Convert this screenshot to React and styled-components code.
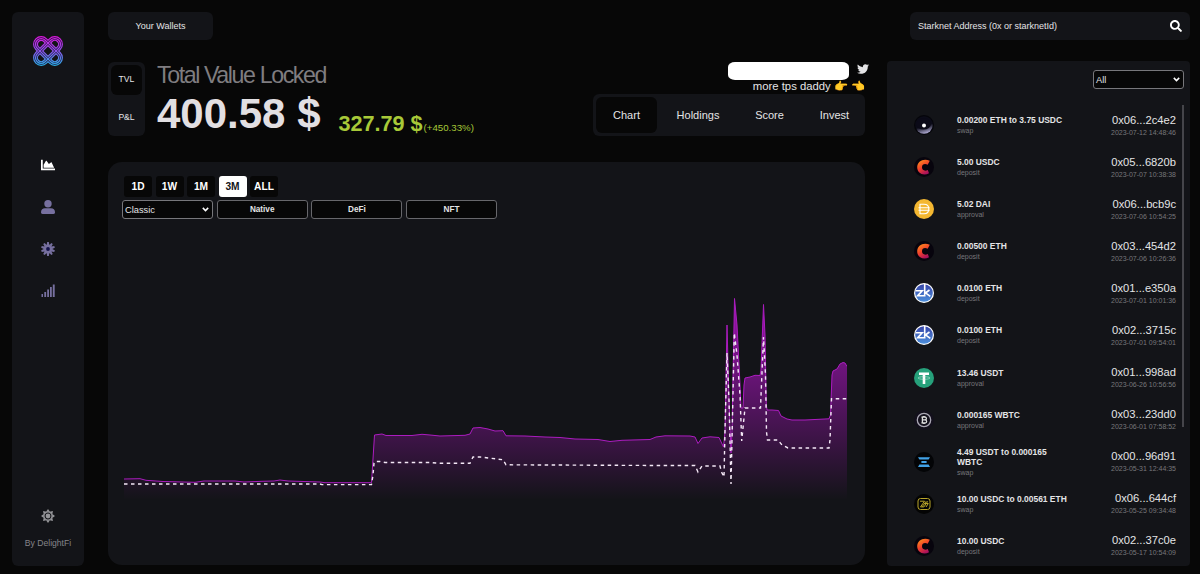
import React from 'react'
import styled, { createGlobalStyle } from 'styled-components'
import { FaChartArea, FaSearch, FaTwitter } from 'react-icons/fa'

const GlobalStyle = createGlobalStyle`
  * {
    box-sizing: border-box;
  }

  body {
    margin: 0;
    background: #070707;
    color: #e4e4e6;
    font-family: 'Liberation Sans', Arial, sans-serif;
    overflow: hidden;
  }

  button {
    font-family: inherit;
    color: inherit;
    border: 0;
    padding: 0;
  }
`

const transactions = [
  { icon: 'orb', name: '0.00200 ETH to 3.75 USDC', type: 'swap', hash: '0x06...2c4e2', date: '2023-07-12 14:48:46' },
  { icon: 'carmine', name: '5.00 USDC', type: 'deposit', hash: '0x05...6820b', date: '2023-07-07 10:38:38' },
  { icon: 'dai', name: '5.02 DAI', type: 'approval', hash: '0x06...bcb9c', date: '2023-07-06 10:54:25' },
  { icon: 'carmine', name: '0.00500 ETH', type: 'deposit', hash: '0x03...454d2', date: '2023-07-06 10:26:36' },
  { icon: 'zk', name: '0.0100 ETH', type: 'deposit', hash: '0x01...e350a', date: '2023-07-01 10:01:36' },
  { icon: 'zk', name: '0.0100 ETH', type: 'deposit', hash: '0x02...3715c', date: '2023-07-01 09:54:01' },
  { icon: 'tether', name: '13.46 USDT', type: 'approval', hash: '0x01...998ad', date: '2023-06-26 10:56:56' },
  { icon: 'wbtc', name: '0.000165 WBTC', type: 'approval', hash: '0x03...23dd0', date: '2023-06-01 07:58:52' },
  { icon: 'sith', name: '4.49 USDT to 0.000165 WBTC', type: 'swap', hash: '0x00...96d91', date: '2023-05-31 12:44:35' },
  { icon: 'tenk', name: '10.00 USDC to 0.00561 ETH', type: 'swap', hash: '0x06...644cf', date: '2023-05-25 09:34:48' },
  { icon: 'carmine', name: '10.00 USDC', type: 'deposit', hash: '0x02...37c0e', date: '2023-05-17 10:54:09' },
]

const totalPoints =
  '124,479 140,478.7 146,480.3 163,481.5 195,482.3 204,481 235,481 244,482 262,481.3 274,481 280,480 288,481 320,482 325,482.7 371.5,482.7 374.5,435 382,434 386,435.5 412,435.5 422,434.3 430,435 440,436 465,435.3 470,434 473,428 480,427.5 488,429 495,431 503,430.7 506,435.8 525,436 545,437 560,437.5 575,439 598,439.5 610,441.5 622,440.3 650,439.5 656,437 665,435.8 690,436 695,437 698,443.5 702,438 710,436.8 719,437.5 723.5,447 725,432 727,325 729,400 731,453 732,430 734.5,298.5 737,325 740,385 741,408 743,408 744,385 745,378 750,377 755,375.3 760,375.5 761,370 763.5,304.5 765,335 766.3,405 767,410 772,410 778.5,410.5 781,416 787,419 792,420 805,420 829,418.8 830.5,415 832,375 833,371 837,369 840,364 843,362.5 845,363 847,366.5'

const nativePoints =
  '124,484 320,484 322,484.6 371.5,484.6 373,475 374,463 375,461.5 380,461.5 385,462.5 430,462.5 440,463.3 470,463.3 473,457 480,457 503,459.7 506,464.8 660,465.5 695,465.5 698,472 702,466 720,466 721.5,472 724,477 725,430 727,353 729,400 731,484 732,440 734.3,333 737,355 740,395 741.7,441 745,408 760.5,408 763.5,337 765.5,375 766.5,432 767.5,440 778,440 782,445 788,448 829,448 830,440 831.5,398.7 847,398.7'

function Logo() {
  return (
    <svg width="30" height="30" viewBox="0 0 30 30" fill="none">
      <defs>
        <linearGradient id="logo" gradientUnits="userSpaceOnUse" x1="0" y1="0" x2="0" y2="30">
          <stop offset="0" stopColor="#e014dc" />
          <stop offset="0.5" stopColor="#8b55ea" />
          <stop offset="1" stopColor="#25b4e6" />
        </linearGradient>
        <path id="loopA" d="M4.2 12.2A5.6 5.6 0 1 1 12.2 4.2L25.8 17.8A5.6 5.6 0 1 1 17.8 25.8Z" />
        <path id="loopB" d="M25.8 12.2A5.6 5.6 0 1 0 17.8 4.2L4.2 17.8A5.6 5.6 0 1 0 12.2 25.8Z" />
      </defs>
      <g stroke="url(#logo)" strokeWidth="5">
        <use href="#loopA" />
        <use href="#loopB" />
      </g>
      <g stroke="#1b1238" strokeWidth="2.6">
        <use href="#loopA" />
        <use href="#loopB" />
      </g>
      <g stroke="url(#logo)" strokeWidth="1.3">
        <use href="#loopA" />
        <use href="#loopB" />
      </g>
    </svg>
  )
}

function PersonIcon() {
  return (
    <svg width="14" height="14" viewBox="0 0 14 14" fill="currentColor">
      <circle cx="7" cy="3.7" r="3.7" />
      <path d="M0 12.3C0 9.7 1.7 8.3 4 8.3H10C12.3 8.3 14 9.7 14 12.3C14 13.3 13.5 13.9 12.5 13.9H1.5C.5 13.9 0 13.3 0 12.3Z" />
    </svg>
  )
}

function GearIcon() {
  return (
    <svg width="14" height="14" viewBox="-7 -7 14 14">
      <g fill="#77709f">
        <circle r="4.5" />
        {[0, 36, 72, 108, 144, 180, 216, 252, 288, 324].map(angle => (
          <path key={angle} d="M-1.2-4L-.9-6.9H.9L1.2-4Z" transform={`rotate(${angle})`} />
        ))}
      </g>
      <circle r="1.9" fill="#14124a" />
    </svg>
  )
}

function SignalIcon() {
  return (
    <svg width="14" height="13" viewBox="0 0 14 13" fill="currentColor">
      <rect x="0.5" y="10" width="1.5" height="3" />
      <rect x="3.3" y="8" width="1.8" height="5" />
      <rect x="6.2" y="5.5" width="1.8" height="7.5" />
      <rect x="9" y="3" width="1.8" height="10" />
      <rect x="11.8" y="0.5" width="1.9" height="12.5" />
    </svg>
  )
}

function SunIcon() {
  return (
    <svg width="14" height="14" viewBox="-7 -7 14 14" fill="#96969a">
      {[0, 45, 90, 135, 180, 225, 270, 315].map(angle => (
        <path key={angle} d="M-1.9-4.2L0-7L1.9-4.2Z" transform={`rotate(${angle})`} />
      ))}
      <circle r="4.1" fill="none" stroke="#96969a" strokeWidth="1.3" />
      <circle r="2.4" />
    </svg>
  )
}

function Chevron() {
  return (
    <svg width="7" height="5" viewBox="0 0 7 5" fill="none" stroke="#fff" strokeWidth="1.5">
      <path d="M0.8 0.9L3.5 3.6L6.2 0.9" />
    </svg>
  )
}

function TokenIcon({ name }) {
  return (
    <svg width="20" height="20" viewBox="0 0 20 20">
      {name === 'orb' && (
        <>
          <defs>
            <linearGradient id="orb" x1="0.2" y1="0" x2="0.5" y2="1">
              <stop offset="0.6" stopColor="#0b0b18" />
              <stop offset="1" stopColor="#a9a5cc" />
            </linearGradient>
          </defs>
          <circle cx="10" cy="10" r="10" fill="#05050a" />
          <circle cx="10" cy="10" r="8.7" fill="url(#orb)" />
          <ellipse cx="9.5" cy="8.8" rx="7.5" ry="5.8" fill="#0b0a18" />
          <circle cx="10" cy="10.4" r="2" fill="#fff" />
        </>
      )}
      {name === 'carmine' && (
        <>
          <defs>
            <linearGradient id="carmine" x1="0.1" y1="0.1" x2="0.6" y2="1">
              <stop offset="0" stopColor="#ff8a1c" />
              <stop offset="0.5" stopColor="#f0402c" />
              <stop offset="1" stopColor="#a8105c" />
            </linearGradient>
          </defs>
          <circle cx="10" cy="10" r="10" fill="#07040d" />
          <path
            d="M15.8 3.7C9.5.8 3.2 4.3 3.2 10.3C3.2 16.5 9.4 19.2 15 16.3L13.8 13C10.8 14.5 8 13.2 8 10.3C8 7.2 10.7 6.2 13.7 7.7Z"
            fill="url(#carmine)"
          />
        </>
      )}
      {name === 'dai' && (
        <>
          <circle cx="10" cy="10" r="10" fill="#f4b731" />
          <path
            d="M6 5.3H10C13 5.3 14.8 7.2 14.8 10S13 14.7 10 14.7H6ZM4.5 8.8H15.7M4.5 11.2H15.7"
            fill="none"
            stroke="#fff"
            strokeWidth="1.1"
          />
        </>
      )}
      {name === 'zk' && (
        <>
          <defs>
            <linearGradient id="zk" x1="0" y1="0" x2="0" y2="1">
              <stop offset="0" stopColor="#3845a8" />
              <stop offset="1" stopColor="#4c8fdc" />
            </linearGradient>
          </defs>
          <circle cx="10" cy="10" r="10" fill="#fff" />
          <circle cx="10" cy="10" r="8.8" fill="url(#zk)" />
          <path
            d="M1.5 7.8H8.2L3.7 12.7H10.7V0.8M10.7 10.5L15.5 7M11.5 9.8L16.3 13.3"
            fill="none"
            stroke="#fff"
            strokeWidth="1.6"
          />
        </>
      )}
      {name === 'tether' && (
        <>
          <circle cx="10" cy="10" r="10" fill="#26a17b" />
          <path d="M5 4.6H15V7H11.3V16H8.7V7H5Z" fill="#fff" />
          <ellipse cx="10" cy="10" rx="6" ry="1.3" fill="none" stroke="#d8f0e8" strokeWidth="0.5" />
        </>
      )}
      {name === 'wbtc' && (
        <>
          <circle cx="10" cy="10" r="10" fill="#13101c" />
          <circle cx="10" cy="10" r="6.7" fill="none" stroke="#aaa7b4" strokeWidth="1.3" />
          <path
            d="M7.4 7.2H11C12.9 7.2 12.9 9.9 11 9.9H8.4M11 9.9C13.2 9.9 13.2 12.9 11 12.9H7.4M8.4 7.2V12.9M9.3 6V7.2M10.8 6V7.2M9.3 12.9V14M10.8 12.9V14"
            fill="none"
            stroke="#ddd"
            strokeWidth="1.3"
          />
        </>
      )}
      {name === 'sith' && (
        <>
          <circle cx="10" cy="10" r="10" fill="#030406" />
          <path d="M4 5.2H16L14.6 7.6H5.4ZM7.4 9H12.6V11H7.4ZM5.4 12.4H14.6L16 14.9H4Z" fill="#41a1e6" />
        </>
      )}
      {name === 'tenk' && (
        <>
          <circle cx="10" cy="10" r="10" fill="#040404" />
          <rect x="4" y="4.5" width="12" height="11" rx="2.5" fill="none" stroke="#b9a529" strokeWidth="1" />
          <path d="M6 7.2H10.5L6.5 12.9H10L13.7 7.3M8 12.9L12.3 7.2M11 9.5H14.3L12 13" fill="none" stroke="#b9a529" />
        </>
      )}
    </svg>
  )
}

function PortfolioChart() {
  return (
    <ChartSvg viewBox="124 290 723 215">
      <defs>
        <linearGradient id="area" gradientUnits="userSpaceOnUse" x1="0" y1="298" x2="0" y2="500">
          <stop offset="0" stopColor="#be14d6" stopOpacity="0.8" />
          <stop offset="1" stopColor="#be14d6" stopOpacity="0" />
        </linearGradient>
      </defs>
      <polygon points={`124,500 ${totalPoints} 847,500`} fill="url(#area)" />
      <polyline points={totalPoints} fill="none" stroke="#ac1cc0" strokeWidth="1" />
      <polyline points={nativePoints} fill="none" stroke="#f4e8f6" strokeWidth="1.4" strokeDasharray="3.5 3.5" />
    </ChartSvg>
  )
}

function Transaction({ tx }) {
  return (
    <TxRow>
      <TokenIcon name={tx.icon} />
      <TxText>
        <TxName>{tx.name}</TxName>
        <TxType>{tx.type}</TxType>
      </TxText>
      <TxMeta>
        <TxHash>{tx.hash}</TxHash>
        <TxDate>{tx.date}</TxDate>
      </TxMeta>
    </TxRow>
  )
}

const Page = styled.div`
  display: flex;
  gap: 24px;
  width: 1200px;
  height: 574px;
  padding: 12px 10px 8px 12px;
`

const Sidebar = styled.aside`
  display: flex;
  flex-direction: column;
  align-items: center;
  width: 72px;
  height: 554px;
  padding: 24px 0 17px;
  background: #131418;
  border-radius: 6px;
`

const Menu = styled.nav`
  display: flex;
  flex-direction: column;
  gap: 21px;
  margin-top: 88px;
`

const MenuItem = styled.a`
  display: flex;
  align-items: center;
  justify-content: center;
  width: 21px;
  height: 21px;
  color: ${({ $active }) => ($active ? '#fff' : '#77709f')};
`

const SidebarFooter = styled.div`
  display: flex;
  flex-direction: column;
  align-items: center;
  gap: 14px;
  margin-top: auto;
  color: #85858a;
  font-size: 8.6px;
  line-height: 12px;
`

const Main = styled.main`
  display: flex;
  flex-direction: column;
  gap: 22px;
  width: 1082px;
`

const TopBar = styled.div`
  display: flex;
  justify-content: space-between;
  height: 28px;
`

const WalletsButton = styled.button`
  width: 105px;
  background: #131418;
  border-radius: 6px;
  font-size: 9px;
`

const SearchBox = styled.div`
  display: flex;
  align-items: center;
  justify-content: space-between;
  width: 280px;
  padding: 0 8px;
  background: #131418;
  border-radius: 6px;
  font-size: 9px;
`

const Content = styled.div`
  display: flex;
  gap: 22px;
`

const Portfolio = styled.section`
  display: flex;
  flex-direction: column;
  gap: 26px;
  width: 757px;
`

const Header = styled.header`
  display: flex;
  height: 74px;
`

const ModeSwitch = styled.div`
  display: flex;
  flex-direction: column;
  justify-content: space-between;
  width: 37px;
  padding: 3px;
  background: #131418;
  border-radius: 6px;
`

const ModeButton = styled.button`
  height: ${({ $active }) => ($active ? '30px' : '32px')};
  padding-bottom: ${({ $active }) => ($active ? '2px' : '0')};
  background: ${({ $active }) => ($active ? '#070707' : 'transparent')};
  border-radius: 6px;
  font-size: 8.6px;
`

const Summary = styled.div`
  display: flex;
  flex-direction: column;
  margin-left: 12px;
`

const SummaryTitle = styled.h1`
  margin: 0;
  color: #7f7d80;
  font-size: 23.2px;
  font-weight: 400;
  line-height: 27px;
  letter-spacing: -1.4px;
`

const SummaryValues = styled.div`
  display: flex;
  align-items: flex-start;
`

const Total = styled.span`
  color: #e2dfe2;
  font-size: 42px;
  font-weight: 700;
  line-height: 49px;
`

const Delta = styled.div`
  display: flex;
  align-items: baseline;
  gap: 1px;
  margin: 23px 0 0 18px;
  color: #a8c938;
  line-height: 24px;
`

const Change = styled.span`
  font-size: 21.6px;
  font-weight: 700;
`

const Percent = styled.span`
  font-size: 9.7px;
`

const HeaderAside = styled.div`
  display: flex;
  flex-direction: column;
  align-items: flex-end;
  margin-left: auto;
`

const Account = styled.div`
  display: flex;
  align-items: flex-start;
  gap: 8px;
  height: 18px;
  margin-right: -4px;
  color: #e4e4e6;
`

const HiddenName = styled.div`
  width: 121px;
  height: 18px;
  background: #fff;
  border-radius: 7px / 5px;
`

const TwitterIcon = styled(FaTwitter)`
  margin-top: 1px;
`

const Bio = styled.div`
  height: 14px;
  font-size: 11.3px;
  line-height: 13px;
  white-space: pre;
`

const Tabs = styled.nav`
  display: flex;
  justify-content: space-between;
  width: 272px;
  height: 42px;
  padding: 3px;
  background: #131418;
  border-radius: 6px;
`

const Tab = styled.a`
  display: flex;
  align-items: center;
  justify-content: center;
  padding-left: ${({ $offset = 0 }) => $offset}px;
  width: ${({ $width }) => $width}px;
  background: ${({ $active }) => ($active ? '#070707' : 'transparent')};
  border-radius: 6px;
  font-size: 11px;
`

const ChartPanel = styled.div`
  display: flex;
  flex-direction: column;
  height: 403px;
  padding: 14px 16px;
  background: #131418;
  border-radius: 14px;
`

const Ranges = styled.div`
  display: flex;
  gap: 3.5px;
`

const Range = styled.button`
  width: 28px;
  height: 21px;
  background: ${({ $active }) => ($active ? '#fff' : '#070707')};
  border-radius: 3px;
  color: ${({ $active }) => ($active ? '#131418' : '#fff')};
  font-size: 10.2px;
  font-weight: 700;
`

const Filters = styled.div`
  display: flex;
  gap: 3.7px;
  margin: 3px 0 0 -2px;
`

const Filter = styled.button`
  width: 91px;
  height: 19px;
  background: #070707;
  border: 1px solid #67676b;
  border-radius: 3px;
  font-size: 8.2px;
  font-weight: 700;
`

const Select = styled.button`
  display: flex;
  flex-shrink: 0;
  align-items: center;
  justify-content: space-between;
  width: 91px;
  height: 19px;
  padding: 0 3px 0 2px;
  background: #070707;
  border: 1px solid #77777b;
  border-radius: 3px;
  font-size: 9.3px;
`

const ChartSvg = styled.svg`
  width: 723px;
  height: 215px;
  margin: 71px 0 0 0;
`

const Activity = styled.section`
  display: flex;
  flex-direction: column;
  align-items: flex-end;
  width: 303px;
  height: 505px;
  margin-top: -1px;
  padding: 9px 6px 0 27px;
  background: #131418;
  border-radius: 4px;
`

const ActivityBody = styled.div`
  display: flex;
  justify-content: space-between;
  width: 100%;
  height: 461px;
  margin-top: 15px;
`

const TxList = styled.div`
  width: 262px;
`

const TxRow = styled.div`
  display: flex;
  align-items: center;
  height: 42.08px;
`

const TxText = styled.div`
  width: 112px;
  margin-left: 23px;
  padding-top: 1px;
`

const TxName = styled.div`
  font-size: 8.45px;
  font-weight: 700;
  line-height: 10px;
`

const TxType = styled.div`
  margin-top: 1px;
  color: #77777b;
  font-size: 7px;
  line-height: 10px;
`

const TxMeta = styled.div`
  display: flex;
  flex-direction: column;
  align-items: flex-end;
  margin-left: auto;
  padding-top: 1px;
`

const TxHash = styled.div`
  font-size: 11.2px;
  line-height: 13px;
`

const TxDate = styled.div`
  margin-top: 1px;
  color: #77777b;
  font-size: 7px;
  line-height: 10px;
`

const ScrollThumb = styled.div`
  width: 2px;
  height: 322px;
  margin-top: 1px;
  background: #45454a;
`

export default function App() {
  return (
    <>
      <GlobalStyle />
      <Page>
        <Sidebar>
          <Logo />
          <Menu>
            <MenuItem $active>
              <FaChartArea size={14} />
            </MenuItem>
            <MenuItem>
              <PersonIcon />
            </MenuItem>
            <MenuItem>
              <GearIcon />
            </MenuItem>
            <MenuItem>
              <SignalIcon />
            </MenuItem>
          </Menu>
          <SidebarFooter>
            <SunIcon />
            <span>By DelightFi</span>
          </SidebarFooter>
        </Sidebar>
        <Main>
          <TopBar>
            <WalletsButton>Your Wallets</WalletsButton>
            <SearchBox>
              <span>Starknet Address (0x or starknetId)</span>
              <FaSearch size={12} color="#fff" />
            </SearchBox>
          </TopBar>
          <Content>
            <Portfolio>
              <Header>
                <ModeSwitch>
                  <ModeButton $active>TVL</ModeButton>
                  <ModeButton>P&amp;L</ModeButton>
                </ModeSwitch>
                <Summary>
                  <SummaryTitle>Total Value Locked</SummaryTitle>
                  <SummaryValues>
                    <Total>400.58 $</Total>
                    <Delta>
                      <Change>327.79 $</Change>
                      <Percent>(+450.33%)</Percent>
                    </Delta>
                  </SummaryValues>
                </Summary>
                <HeaderAside>
                  <Account>
                    <HiddenName />
                    <TwitterIcon size={12} />
                  </Account>
                  <Bio>more tps daddy 👉 👈</Bio>
                  <Tabs>
                    <Tab $active $width={61}>Chart</Tab>
                    <Tab $width={82}>Holdings</Tab>
                    <Tab $width={61}>Score</Tab>
                    <Tab $width={62} $offset={7}>Invest</Tab>
                  </Tabs>
                </HeaderAside>
              </Header>
              <ChartPanel>
                <Ranges>
                  {['1D', '1W', '1M', '3M', 'ALL'].map(range => (
                    <Range key={range} $active={range === '3M'}>{range}</Range>
                  ))}
                </Ranges>
                <Filters>
                  <Select>
                    Classic
                    <Chevron />
                  </Select>
                  <Filter>Native</Filter>
                  <Filter>DeFi</Filter>
                  <Filter>NFT</Filter>
                </Filters>
                <PortfolioChart />
              </ChartPanel>
            </Portfolio>
            <Activity>
              <Select>
                All
                <Chevron />
              </Select>
              <ActivityBody>
                <TxList>
                  {transactions.map(tx => (
                    <Transaction key={tx.hash} tx={tx} />
                  ))}
                </TxList>
                <ScrollThumb />
              </ActivityBody>
            </Activity>
          </Content>
        </Main>
      </Page>
    </>
  )
}
